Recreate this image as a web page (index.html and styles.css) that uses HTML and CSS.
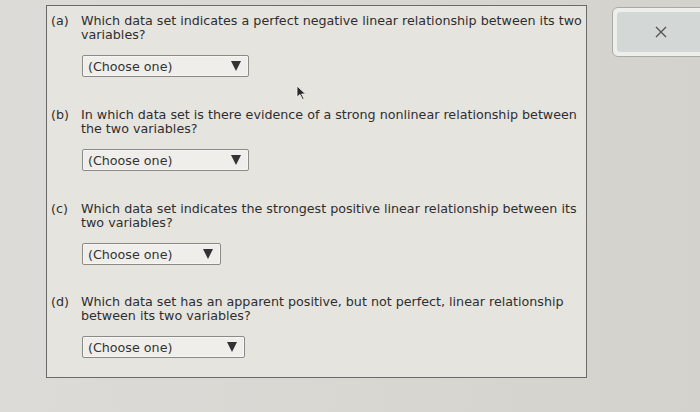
FILE: index.html
```html
<!DOCTYPE html>
<html>
<head>
<meta charset="utf-8">
<link rel="stylesheet" href="styles.css">
</head>
<body>
<div class="page">
  <div class="panel">
    <div class="q">
      <div class="qhead"><span class="lbl">(a)</span><span class="txt">Which data set indicates a perfect negative linear relationship between its two<br>variables?</span></div>
      <div class="sel w167"><span>(Choose one)</span><span class="tri"></span></div>
    </div>
    <div class="q">
      <div class="qhead"><span class="lbl">(b)</span><span class="txt">In which data set is there evidence of a strong nonlinear relationship between<br>the two variables?</span></div>
      <div class="sel w167"><span>(Choose one)</span><span class="tri"></span></div>
    </div>
    <div class="q">
      <div class="qhead"><span class="lbl">(c)</span><span class="txt">Which data set indicates the strongest positive linear relationship between its<br>two variables?</span></div>
      <div class="sel w139"><span>(Choose one)</span><span class="tri"></span></div>
    </div>
    <div class="q">
      <div class="qhead"><span class="lbl">(d)</span><span class="txt">Which data set has an apparent positive, but not perfect, linear relationship<br>between its two variables?</span></div>
      <div class="sel w163"><span>(Choose one)</span><span class="tri"></span></div>
    </div>
    <svg class="cursor" width="12" height="16" viewBox="0 0 12 16"><path d="M1 1 L1 12 L4 9.5 L6.5 14.5 L8 13.8 L5.6 9 L9.5 9 Z" fill="#2a2a2a" stroke="#f4f4f4" stroke-width="0.8"/></svg>
  </div>
  <div class="closebtn">
    <div class="closeinner">
      <svg width="12" height="12" viewBox="0 0 12 12"><path d="M1 1 L11 11 M11 1 L1 11" stroke="#555" stroke-width="1.4" fill="none"/></svg>
    </div>
  </div>
</div>
</body>
</html>
```
FILE: styles.css
```css
html, body {
  margin: 0;
  padding: 0;
}
body {
  width: 700px;
  height: 412px;
  background: linear-gradient(90deg, #dcdbd7 0%, #d8d7d2 50%, #d3d2cd 100%);
  font-family: "DejaVu Sans", Verdana, sans-serif;
  color: #2e2e2e;
  overflow: hidden;
}
.page {
  display: flex;
  align-items: flex-start;
  padding: 5px 0 0 46px;
}
.panel {
  position: relative;
  flex: none;
  width: 541px;
  height: 373px;
  border: 1.5px solid #6a6a6a;
  background: #e6e4df;
  padding: 8px 0 0 4px;
  box-sizing: border-box;
  display: flex;
  flex-direction: column;
}
.q {
  flex: none;
  height: 94px;
}
.q:nth-child(3) { height: 93px; }
.qhead {
  display: flex;
  font-size: 12.7px;
  line-height: 13.5px;
}
.lbl {
  width: 30px;
  flex: none;
}
.txt {
  flex: 1;
  white-space: nowrap;
}
.sel {
  margin: 14px 0 0 31px;
  height: 22px;
  box-sizing: border-box;
  border: 1px solid #8a8a88;
  border-radius: 2px;
  background: #efeeea;
  display: flex;
  align-items: center;
  justify-content: space-between;
  padding: 0 7px 0 5px;
  font-size: 12.7px;
  color: #333;
  box-shadow: inset 0 0 0 1px #f6f5f1;
}
.w167 { width: 167px; }
.w139 { width: 139px; }
.w163 { width: 163px; }
.tri {
  width: 0;
  height: 0;
  border-left: 5px solid transparent;
  border-right: 5px solid transparent;
  border-top: 10px solid #333;
}
.cursor {
  position: absolute;
  left: 249px;
  top: 79px;
}
.closebtn {
  margin-left: 25px;
  margin-top: 2px;
  width: 100px;
  height: 50px;
  box-sizing: border-box;
  border: 1.5px solid #a9aaa7;
  border-radius: 6px;
  background: #eeeeeb;
  padding: 4px;
  flex: none;
}
.closeinner {
  height: 100%;
  border-radius: 3px;
  background: #d3d8d6;
  display: flex;
  align-items: center;
  padding-left: 38px;
  box-sizing: border-box;
}
```
